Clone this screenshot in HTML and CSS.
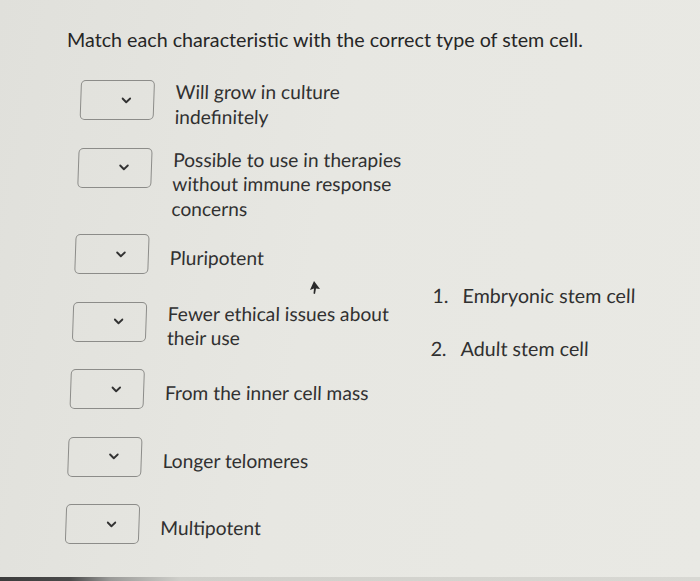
FILE: index.html
```html
<!DOCTYPE html>
<html lang="en">
<head>
<meta charset="utf-8">
<title>Match stem cells</title>
<link rel="stylesheet" href="styles.css">
</head>
<body>
<div class="page">
  <h1 class="title">Match each characteristic with the correct type of stem cell.</h1>
  <div class="content">
    <div class="items">
      <div class="row">
        <div class="select"><svg class="chev" width="10" height="7" viewBox="0 0 10 7"><path d="M1.2 1.5 L5 5.2 L8.8 1.5" fill="none" stroke="#333" stroke-width="1.9" stroke-linecap="round" stroke-linejoin="round"/></svg></div>
        <div class="label multi">Will grow in culture<br>indefinitely</div>
      </div>
      <div class="row">
        <div class="select"><svg class="chev" width="10" height="7" viewBox="0 0 10 7"><path d="M1.2 1.5 L5 5.2 L8.8 1.5" fill="none" stroke="#333" stroke-width="1.9" stroke-linecap="round" stroke-linejoin="round"/></svg></div>
        <div class="label multi">Possible to use in therapies<br>without immune response<br>concerns</div>
      </div>
      <div class="row">
        <div class="select"><svg class="chev" width="10" height="7" viewBox="0 0 10 7"><path d="M1.2 1.5 L5 5.2 L8.8 1.5" fill="none" stroke="#333" stroke-width="1.9" stroke-linecap="round" stroke-linejoin="round"/></svg></div>
        <div class="label">Pluripotent</div>
      </div>
      <div class="row">
        <div class="select"><svg class="chev" width="10" height="7" viewBox="0 0 10 7"><path d="M1.2 1.5 L5 5.2 L8.8 1.5" fill="none" stroke="#333" stroke-width="1.9" stroke-linecap="round" stroke-linejoin="round"/></svg></div>
        <div class="label multi">Fewer ethical issues about<br>their use</div>
      </div>
      <div class="row">
        <div class="select"><svg class="chev" width="10" height="7" viewBox="0 0 10 7"><path d="M1.2 1.5 L5 5.2 L8.8 1.5" fill="none" stroke="#333" stroke-width="1.9" stroke-linecap="round" stroke-linejoin="round"/></svg></div>
        <div class="label">From the inner cell mass</div>
      </div>
      <div class="row">
        <div class="select"><svg class="chev" width="10" height="7" viewBox="0 0 10 7"><path d="M1.2 1.5 L5 5.2 L8.8 1.5" fill="none" stroke="#333" stroke-width="1.9" stroke-linecap="round" stroke-linejoin="round"/></svg></div>
        <div class="label">Longer telomeres</div>
      </div>
      <div class="row">
        <div class="select"><svg class="chev" width="10" height="7" viewBox="0 0 10 7"><path d="M1.2 1.5 L5 5.2 L8.8 1.5" fill="none" stroke="#333" stroke-width="1.9" stroke-linecap="round" stroke-linejoin="round"/></svg></div>
        <div class="label">Multipotent</div>
      </div>
    </div>
    <ol class="answers">
      <li><span class="num">1.</span><span>Embryonic stem cell</span></li>
      <li><span class="num">2.</span><span>Adult stem cell</span></li>
    </ol>
  </div>
  <svg class="cursor" width="12" height="14" viewBox="0 0 12 14"><path d="M5 0 L11 8 L7 7.5 L6 13 L4.5 12.5 L5 7.5 L1 9 Z" fill="#2a2a2a"/></svg>
</div>
<div class="band"></div>
</body>
</html>
```
FILE: styles.css
```css
html, body {
  margin: 0;
  padding: 0;
}
body {
  background: #e4e4df;
  font-family: Lato, "Open Sans", sans-serif;
  color: #303030;
  width: 700px;
  height: 581px;
  overflow: hidden;
}
.page {
  position: relative;
  height: 577px;
  background: linear-gradient(100deg, #e0e0db 0%, #e7e7e2 45%, #e9e9e4 100%);
}
.title {
  margin: 0;
  padding: 28px 0 0 67px;
  font-size: 19.7px;
  line-height: 24px;
  font-weight: 400;
  color: #262626;
}
.content {
  display: flex;
  padding-top: 28px;
}
.items {
  display: flex;
  flex-direction: column;
  padding-left: 81px;
  width: 330px;
  transform: skewX(-2deg);
  transform-origin: 0 0;
}
.row {
  display: flex;
  align-items: flex-start;
  gap: 21px;
  min-height: 67.5px;
  padding-bottom: 13px;
  box-sizing: border-box;
}
.select {
  flex: none;
  width: 74px;
  height: 40px;
  box-sizing: border-box;
  border: 1.5px solid #8c8c89;
  border-radius: 5px;
  display: flex;
  align-items: center;
  justify-content: flex-end;
  padding-right: 22px;
}
.chev {
  display: block;
}
.label {
  font-size: 19.2px;
  line-height: 24.5px;
  padding-top: 12px;
}
.label.multi {
  padding-top: 0;
}
.answers {
  list-style: none;
  margin: 203px 0 0 0;
  padding: 0 0 0 22px;
  font-size: 19.7px;
  line-height: 25px;
  transform: skewX(-2deg);
  transform-origin: 0 0;
}
.answers li {
  display: flex;
  margin-bottom: 28px;
}
.num {
  width: 30px;
}
.cursor {
  position: absolute;
  left: 309px;
  top: 281px;
}
.band {
  height: 4px;
  background: linear-gradient(90deg, #3c3c3c 0, #4a4a4a 70px, #9a9a98 110px, #cfcfca 180px, #d8d8d3 100%);
}
```
